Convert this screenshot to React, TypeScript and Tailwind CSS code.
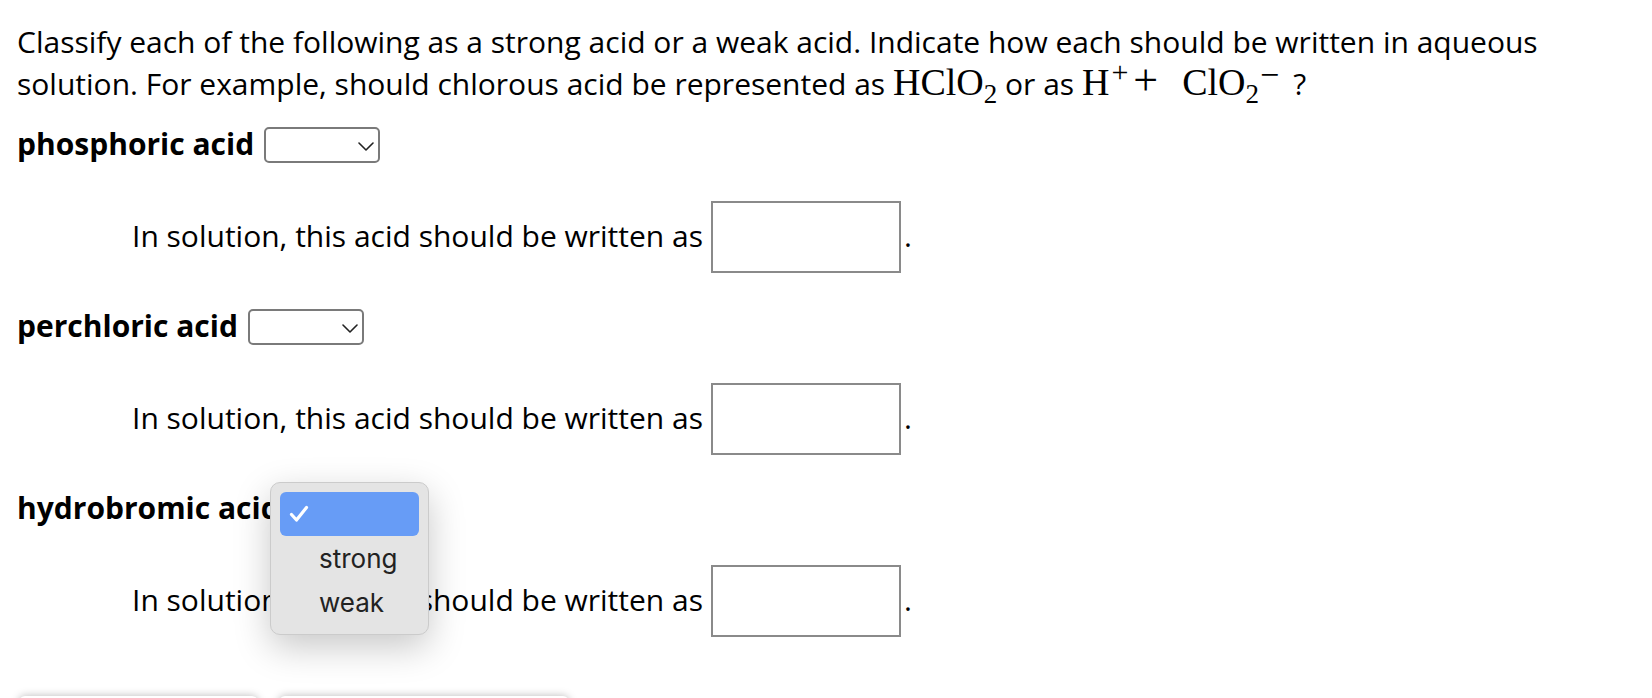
import React from "react";

function Chevron() {
  return (
    <svg width="16" height="9" viewBox="0 0 16 9" className="absolute left-[92px] top-[13px]">
      <path d="M1 1 L8 8 L15 1" fill="none" stroke="#222" strokeWidth="1.6" strokeLinecap="round" strokeLinejoin="round" />
    </svg>
  );
}

function Select() {
  return (
    <div className="relative ml-[10px] mt-[7px] w-[116px] h-[36px] border-2 border-[#7a7a7a] rounded-[5px] bg-white shrink-0">
      <Chevron />
    </div>
  );
}

function Block({ label }: { label: string }) {
  return (
    <div className="mb-[29px]">
      <div className="flex items-start h-[42px]">
        <span className="font-bold whitespace-nowrap pt-[3px]">{label}</span>
        <Select />
      </div>
      <div className="mt-[39px] flex items-center h-[72px] pl-[115px]">
        <span className="mb-[2px] whitespace-nowrap">In solution, this acid should be written as</span>
        <div className="ml-[8px] w-[190px] h-[72px] border-2 border-[#8a8a8a] bg-white shrink-0" />
        <span className="ml-[3px] mb-[2px]">.</span>
      </div>
    </div>
  );
}

export default function App() {
  return (
    <div
      className="relative w-[1652px] h-[698px] overflow-hidden bg-white text-black"
      style={{ fontFamily: '"Open Sans", "Noto Sans", sans-serif' }}
    >
      <div className="pt-[21px] pl-[17px]">
        <p className="text-[30px] leading-[42px] whitespace-nowrap">
          Classify each of the following as a strong acid or a weak acid. Indicate how each should be written in aqueous
          <br />
          solution. For example, should chlorous acid be represented as{" "}
          <span className="font-['Liberation_Serif'] text-[38px] leading-[30px]">
            HClO<span className="inline-block text-[27px] leading-[20px] translate-y-[8px]">2</span>
          </span>{" "}
          or as{" "}
          <span className="font-['Liberation_Serif'] text-[38px] leading-[30px]">
            H<span className="inline-block text-[30px] leading-[20px] -translate-y-[13px] ml-[2px]">+</span>
            <span className="inline-block text-[44px] leading-[30px] ml-[5px] mr-[24px]">+</span>ClO
            <span className="inline-block text-[27px] leading-[20px] translate-y-[8px]">2</span>
            <span className="inline-block text-[34px] leading-[20px] -translate-y-[9px] ml-[1px]">−</span>
          </span>
          <span className="ml-[14px]">?</span>
        </p>
        <div className="mt-[15px] text-[30px] leading-[42px]">
          <Block label="phosphoric acid" />
          <Block label="perchloric acid" />
          <Block label="hydrobromic acid" />
        </div>
        <div className="flex gap-[21px] mt-[59px] ml-[2px]">
          <div className="w-[239px] h-[40px] rounded-[6px] bg-white shadow-[0_0_8px_rgba(0,0,0,0.28)]" />
          <div className="w-[290px] h-[40px] rounded-[6px] bg-white shadow-[0_0_8px_rgba(0,0,0,0.28)]" />
        </div>
      </div>

      <div
        className="absolute left-[270px] top-[482px] w-[159px] h-[153px] rounded-[10px] bg-[#e4e4e4] border border-[#cbcbcb] shadow-[0_12px_36px_rgba(0,0,0,0.22)] p-[9px]"
        style={{ fontFamily: 'Inter, "Liberation Sans", sans-serif' }}
      >
        <div className="h-[44px] rounded-[6px] bg-[#679cf6] flex items-center pl-[9px]">
          <svg width="20" height="18" viewBox="0 0 20 18">
            <path d="M2.5 9.5 L7.5 15 L17.5 2.5" fill="none" stroke="#fff" strokeWidth="3.2" strokeLinecap="round" strokeLinejoin="round" />
          </svg>
        </div>
        <div className="h-[44px] flex items-center pl-[39px] text-[26px] text-[#222]">strong</div>
        <div className="h-[44px] flex items-center pl-[39px] text-[26px] text-[#222]">weak</div>
      </div>
    </div>
  );
}
